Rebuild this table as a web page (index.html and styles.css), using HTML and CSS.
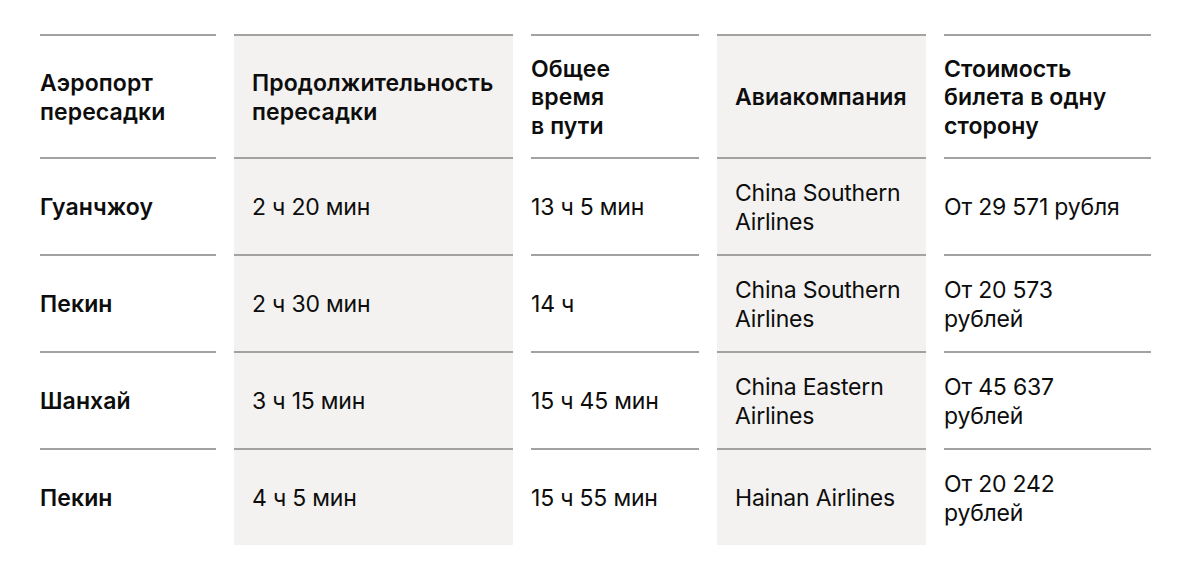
FILE: index.html
```html
<!DOCTYPE html>
<html lang="ru">
<head>
<meta charset="utf-8">
<link rel="stylesheet" href="styles.css">
</head>
<body>
<div class="table">
  <div class="cell head">Аэропорт<br>пересадки</div>
  <div class="cell head shade">Продолжительность<br>пересадки</div>
  <div class="cell head">Общее<br>время<br>в пути</div>
  <div class="cell head shade">Авиакомпания</div>
  <div class="cell head">Стоимость<br>билета в одну<br>сторону</div>

  <div class="cell name">Гуанчжоу</div>
  <div class="cell shade">2 ч 20 мин</div>
  <div class="cell">13 ч 5 мин</div>
  <div class="cell shade">China Southern<br>Airlines</div>
  <div class="cell">От 29 571 рубля</div>

  <div class="cell name">Пекин</div>
  <div class="cell shade">2 ч 30 мин</div>
  <div class="cell">14 ч</div>
  <div class="cell shade">China Southern<br>Airlines</div>
  <div class="cell">От 20 573<br>рублей</div>

  <div class="cell name">Шанхай</div>
  <div class="cell shade">3 ч 15 мин</div>
  <div class="cell">15 ч 45 мин</div>
  <div class="cell shade">China Eastern<br>Airlines</div>
  <div class="cell">От 45 637<br>рублей</div>

  <div class="cell name">Пекин</div>
  <div class="cell shade">4 ч 5 мин</div>
  <div class="cell">15 ч 55 мин</div>
  <div class="cell shade">Hainan Airlines</div>
  <div class="cell">От 20 242<br>рублей</div>
</div>
</body>
</html>
```

FILE: styles.css
```css
html, body {
  margin: 0;
  padding: 0;
  background: #ffffff;
}

body {
  font-family: Inter, "Noto Sans", sans-serif;
  color: #0d0d0d;
}

.table {
  display: grid;
  grid-template-columns: 176px 279px 168px 209px 207px;
  grid-template-rows: 123px 97px 97px 97px 97px;
  column-gap: 18px;
  margin: 34px 0 0 40px;
}

.cell {
  display: flex;
  align-items: center;
  border-top: 2px solid #a2a2a2;
  padding-top: 2px;
  font-size: 23px;
  line-height: 29px;
  font-weight: 400;
  letter-spacing: -0.2px;
  white-space: nowrap;
}

.shade {
  background: #f3f2f0;
  padding-left: 18px;
  padding-right: 18px;
}

.head {
  font-weight: 600;
  line-height: 28.5px;
  letter-spacing: 0.1px;
}

.name {
  font-weight: 600;
  letter-spacing: 0.1px;
}
```
